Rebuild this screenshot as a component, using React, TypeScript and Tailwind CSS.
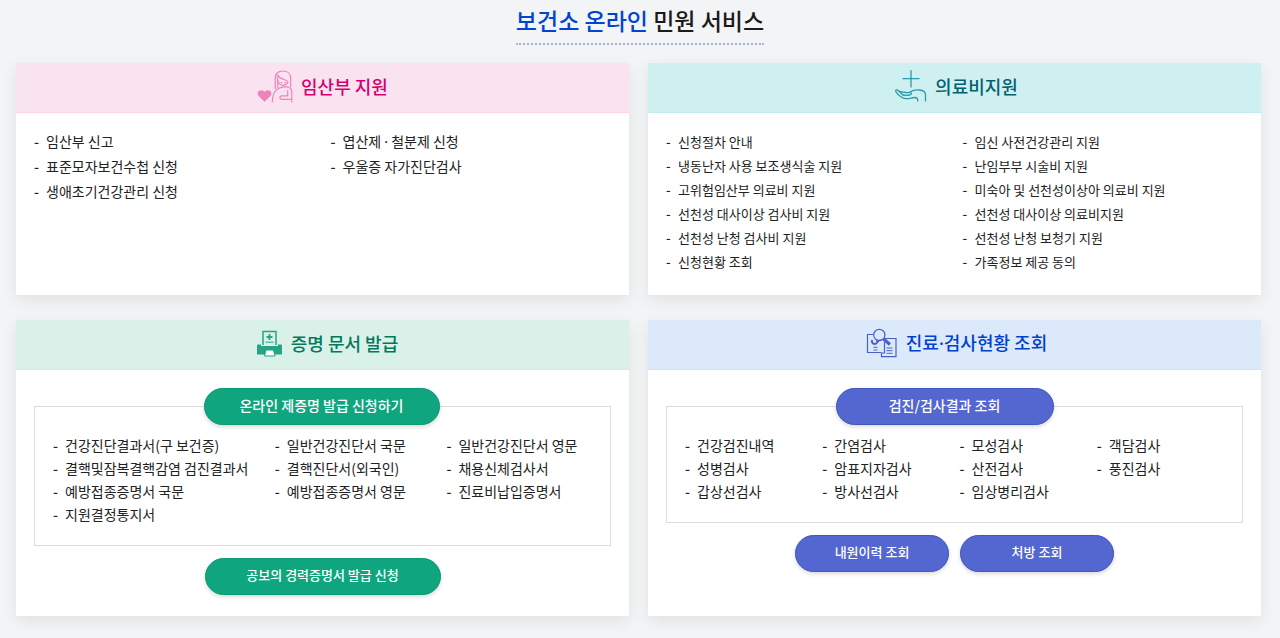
import { Fragment, type ReactNode } from "react";
import clsx from "clsx";

const maternity = [
  "임산부 신고",
  "엽산제 · 철분제 신청",
  "표준모자보건수첩 신청",
  "우울증 자가진단검사",
  "생애초기건강관리 신청",
];

const medicalCosts = [
  "신청절차 안내",
  "임신 사전건강관리 지원",
  "냉동난자 사용 보조생식술 지원",
  "난임부부 시술비 지원",
  "고위험임산부 의료비 지원",
  "미숙아 및 선천성이상아 의료비 지원",
  "선천성 대사이상 검사비 지원",
  "선천성 대사이상 의료비지원",
  "선천성 난청 검사비 지원",
  "선천성 난청 보청기 지원",
  "신청현황 조회",
  "가족정보 제공 동의",
];

const certificates = [
  "건강진단결과서(구 보건증)",
  "일반건강진단서 국문",
  "일반건강진단서 영문",
  "결핵및잠복결핵감염 검진결과서",
  "결핵진단서(외국인)",
  "채용신체검사서",
  "예방접종증명서 국문",
  "예방접종증명서 영문",
  "진료비납입증명서",
  "지원결정통지서",
];

const checkups = [
  "건강검진내역",
  "간염검사",
  "모성검사",
  "객담검사",
  "성병검사",
  "암표지자검사",
  "산전검사",
  "풍진검사",
  "갑상선검사",
  "방사선검사",
  "임상병리검사",
];

function MotherIcon() {
  return (
    <svg viewBox="0 0 36 36" className="h-9 w-9" fill="none" stroke="#ee82bb" strokeWidth="1.2" strokeLinecap="round" aria-hidden="true">
      <path d="M7.5 31.8 1.8 26.3C0 24.3.3 21.7 2.2 20.8c1.9-1 4.2-.5 5.300 1.200 1.100-1.700 3.400-2.200 5.300-1.200 1.900.9 2.200 3.500.4 5.500Z" fill="#ee82bb" stroke="none" />
      <path d="M18.200 18.500V8.200C18.200 3.500 21.500 1 26 1s7.700 2.700 7.700 7v8.500" />
      <path d="M20.700 17.500V6" />
      <path d="M21 5c1 3 3.500 3.800 6 4.500 2 .6 3.300 1.500 4 3" />
      <path d="M21.300 11c.4 2.800 2.200 4.300 4.600 4.300s4.200-1.300 4.800-3.500" />
      <path d="M24 12.700h.8M27.500 12.900h.8" />
      <path d="M15.300 32c.2-6 1.700-11.200 6-13.500 2.700-1.500 6.200-1.900 8.700-1.600 3.300.4 4.800 2.500 4.800 5.600V32" />
      <path d="M30.700 20.500v5.300h-6c-2.400 0-2.400 3.500 0 3.500h10" />
    </svg>
  );
}

function HandPlusIcon() {
  return (
    <svg viewBox="0 0 36 36" className="h-9 w-9" fill="none" stroke="#2a9cb0" strokeWidth="1.300" strokeLinecap="round" strokeLinejoin="round" aria-hidden="true">
      <path d="M20 .5V17M12 8.700h16" />
      <path d="M19 22c3-2 6-2.300 9.500-2 4 .3 6 2 6 5V31" />
      <path d="M12 25 7 20.200c-1.500-1-3 .2-2 1.600C8 26 10.500 28.200 15 28.700c4 .2 5.500-1.200 9-1.200 1.900 0 2.800 1 2.800 3.500" />
      <path d="M8.500 21.500c3.500 0 5.500 1.800 10 .8 2.200-.2 2.500 1.900.5 2.500-1.700.6-4.500.6-7 .2" />
    </svg>
  );
}

function PrinterIcon() {
  return (
    <svg viewBox="0 0 36 36" className="h-9 w-9" fill="none" aria-hidden="true">
      <path d="M16 18V4.500h13V18" stroke="#24a584" strokeWidth="1.500" />
      <path d="M22.500 7v6M19.500 10h6" stroke="#24a584" strokeWidth="1.800" />
      <path d="M18.500 15.200h8" stroke="#24a584" strokeWidth="1" />
      <path d="M10 19c0-1 .6-1.500 1.500-1.500h2.500V19h17v-1.500h2.500c.9 0 1.500.5 1.500 1.500v8.500H10Z" fill="#24a584" />
      <path d="M19 23h7.500l1.500 6H17.500Z" fill="#fff" stroke="#24a584" strokeWidth="1" />
    </svg>
  );
}

function RecordsIcon() {
  return (
    <svg viewBox="0 0 36 36" className="h-9 w-9" fill="none" stroke="#4a60c8" strokeWidth="1.200" aria-hidden="true">
      <path d="M11 7.500H5.500v18h13.500M22.500 11.500h11.500v18.200H19.500V26h3V15" />
      <circle cx="17.300" cy="8" r="5.600" />
      <path d="m21.500 12 6.500 5.500" strokeWidth="3" />
      <path d="M10.200 13c-.8 2 .3 4 2.400 4s3.300-2 2.500-4" strokeWidth="2" />
      <path d="m15 15.500 3.500-3" />
      <path d="M11.500 20.300h4M11.500 23h4M24.500 21h6M24.500 23.700h6M24.500 26.300h6" strokeWidth="1" />
    </svg>
  );
}

// the Korean face draws the middle dot wide, so it comes from the Latin one
function Label({ text }: { text: string }) {
  return text.split("·").map((part, i) => (
    <Fragment key={i}>
      {i > 0 && <span className="font-['Noto_Sans',sans-serif]">·</span>}
      {part}
    </Fragment>
  ));
}

type CardProps = {
  title: string;
  icon: ReactNode;
  headClass: string;
  children: ReactNode;
};

function Card({ title, icon, headClass, children }: CardProps) {
  return (
    <section className="bg-white shadow-[0_5px_15px_rgba(0,0,0,0.08)]">
      <h2 className={clsx("flex h-[50px] items-center justify-center gap-2 border-b text-lg font-medium", headClass)}>
        {icon}
        <span className="pb-1">
          <Label text={title} />
        </span>
      </h2>
      {children}
    </section>
  );
}

function LinkList({ items, className }: { items: string[]; className: string }) {
  return (
    <ul className={clsx("grid text-[#222]", className)}>
      {items.map((item) => (
        <li key={item} className="flex whitespace-nowrap before:w-3 before:font-medium before:content-['-']">
          <a href="#" className="hover:underline">
            <Label text={item} />
          </a>
        </li>
      ))}
    </ul>
  );
}

const pill = "rounded-full border pb-[3px] text-center font-medium text-white shadow-[0_2px_4px_rgba(0,0,0,0.15)]";
const green = "border-[#0b9a74] bg-[#0fa67f]";
const indigo = "border-[#3f55c0] bg-[#5466d0]";

// bordered box with its main button sitting on the top edge
function Panel({ label, buttonClass, children }: { label: string; buttonClass: string; children: ReactNode }) {
  return (
    <div className="relative border border-[#dcdcdc] pt-[27px] pr-2 pb-[19px] pl-[18px]">
      <button type="button" className={clsx(pill, "absolute -top-[19px] left-1/2 -ml-[119px] h-[37px] text-sm", buttonClass)}>
        {label}
      </button>
      {children}
    </div>
  );
}

export default function App() {
  return (
    <main className="min-h-screen bg-[#f3f4f6] pb-[22px] font-['Noto_Sans_CJK_KR','Noto_Sans_KR',sans-serif]">
      <header className="flex justify-center pb-[18px]">
        <h1 className="border-b-2 border-dotted border-[#9fb4e4] pb-[2px] text-[23px] leading-[41px] font-medium text-[#1a1a1a]">
          <span className="text-[#0045d0]">보건소 온라인</span> 민원 서비스
        </h1>
      </header>

      <div className="grid grid-cols-1 gap-x-[19px] gap-y-[25px] pr-[19px] pl-4 md:grid-cols-2">
        <Card title="임산부 지원" icon={<MotherIcon />} headClass="border-[#fad3e6] bg-[#fae3f0] text-[#d6006f]">
          <LinkList items={maternity} className="grid-cols-2 gap-x-4 px-[18px] pt-4 pb-5 text-sm leading-[25px]" />
        </Card>

        <Card title="의료비지원" icon={<HandPlusIcon />} headClass="border-[#c3eaec] bg-[#cff0f1] text-[#045f70]">
          <LinkList items={medicalCosts} className="grid-cols-2 gap-x-4 px-[18px] pt-[17px] pb-[21px] text-[13px] leading-6" />
        </Card>

        <Card title="증명 문서 발급" icon={<PrinterIcon />} headClass="border-[#d0ece3] bg-[#daf1ea] text-[#007a5a]">
          <div className="px-[18px] pt-9 pb-[21px]">
            <Panel label="온라인 제증명 발급 신청하기" buttonClass={clsx("w-[236px]", green)}>
              <LinkList items={certificates} className="grid-cols-[221fr_171fr_155fr] text-sm leading-[23px]" />
            </Panel>
            <div className="mt-3 flex justify-center">
              <button type="button" className={clsx(pill, "h-[37px] w-[236px] text-[13px]", green)}>공보의 경력증명서 발급 신청</button>
            </div>
          </div>
        </Card>

        <Card title="진료·검사현황 조회" icon={<RecordsIcon />} headClass="border-[#d3e2f9] bg-[#dce9fb] text-[#0041cc]">
          <div className="px-[18px] pt-9 pb-[21px]">
            <Panel label="검진/검사결과 조회" buttonClass={clsx("w-[218px]", indigo)}>
              <LinkList items={checkups} className="grid-cols-4 text-sm leading-[23px]" />
            </Panel>
            <div className="mt-3 flex justify-center gap-[11px]">
              <button type="button" className={clsx(pill, "h-[37px] w-[154px] text-[13px]", indigo)}>내원이력 조회</button>
              <button type="button" className={clsx(pill, "h-[37px] w-[154px] text-[13px]", indigo)}>처방 조회</button>
            </div>
          </div>
        </Card>
      </div>
    </main>
  );
}
